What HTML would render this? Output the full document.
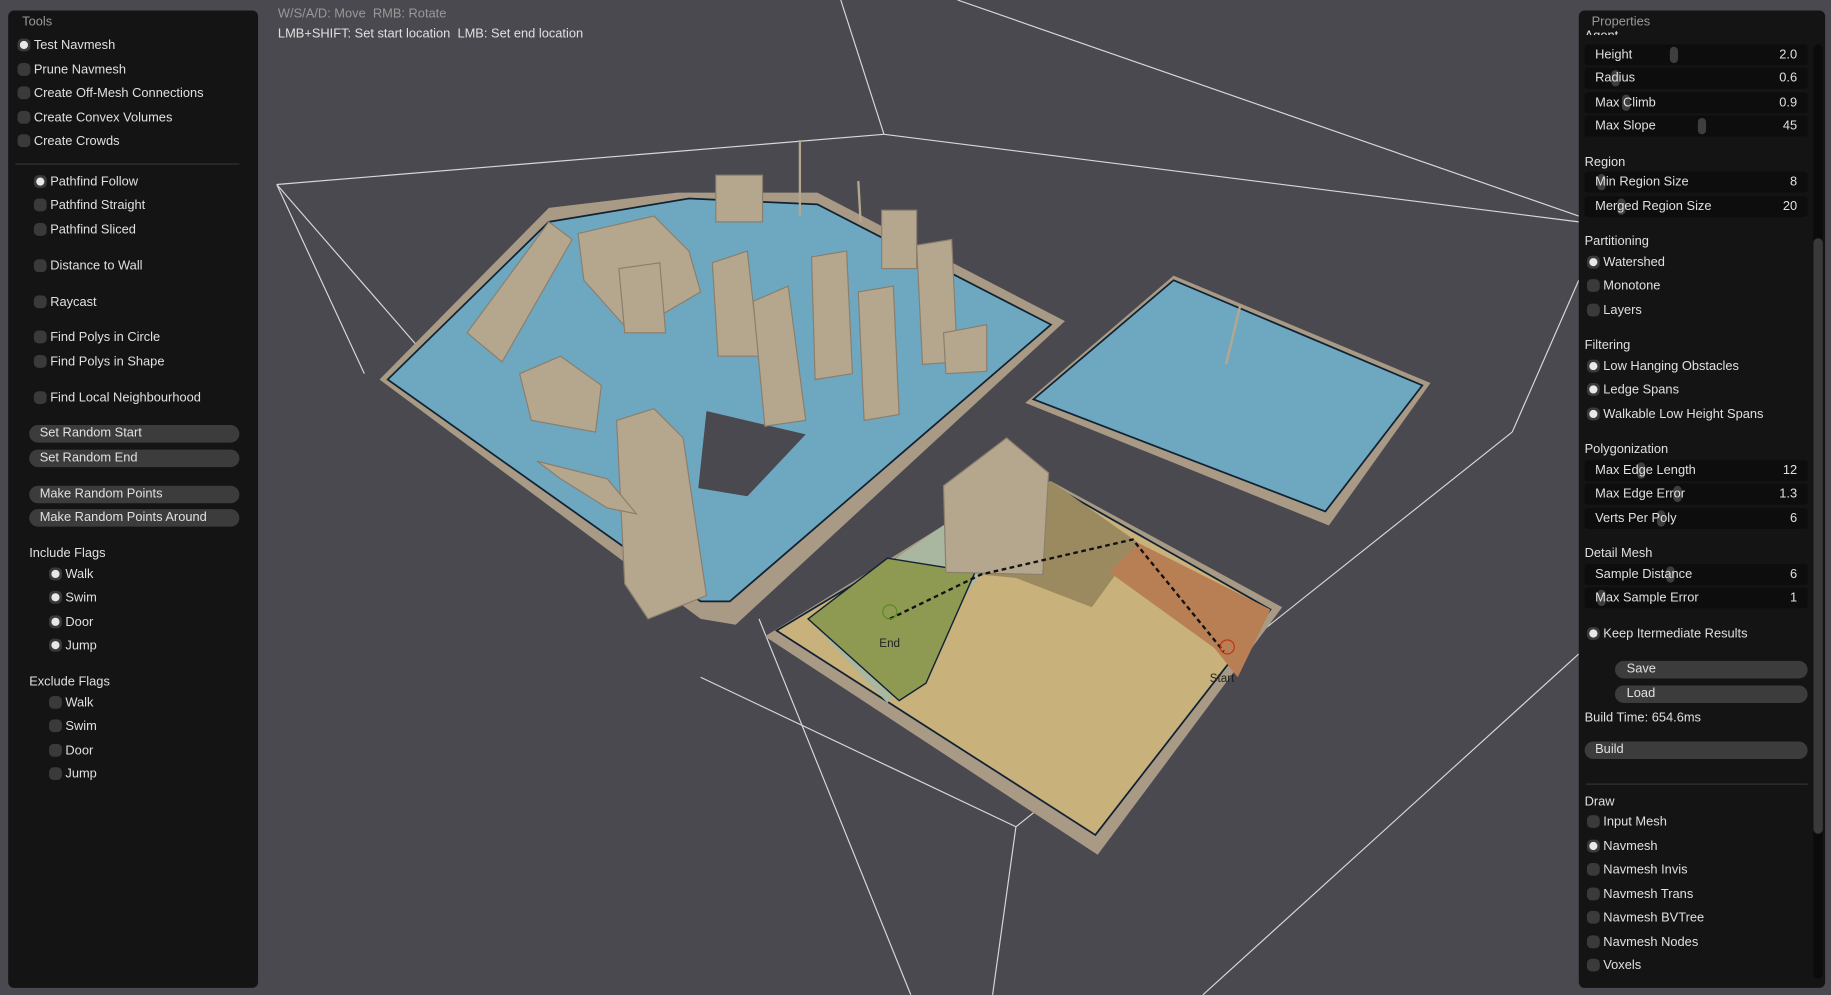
<!DOCTYPE html>
<html><head><meta charset="utf-8"><style>
html,body{margin:0;padding:0;width:1831px;height:995px;overflow:hidden;background:#4a4950;}
#s{position:absolute;left:0;top:0;width:1568px;height:852px;transform:scale(1.16773);transform-origin:0 0;font-family:"Liberation Sans",sans-serif;font-size:11px;color:#e0e0e0;}
.p{position:absolute;background:#141414;border-radius:5px;}
.t{position:absolute;white-space:nowrap;line-height:14px;}
.cb{position:absolute;width:11px;height:11px;border-radius:4px;background:#3a3a3a;margin-top:-1px;}
.cb.on::after{content:"";position:absolute;left:2px;top:2px;width:7px;height:7px;border-radius:4px;background:#e8e8e8;}
.btn{position:absolute;height:15px;border-radius:8px;background:#3c3c3c;line-height:15px;padding-left:9px;box-sizing:border-box;}
.sl{position:absolute;height:18px;background:#0d0d0d;border-radius:3px;line-height:18px;}
.sl .k{position:absolute;top:2px;width:7px;height:14px;border-radius:4px;background:#3e3e3e;}
.sl .l{position:absolute;left:9px;}
.sl .v{position:absolute;right:9px;}
.h{color:#999;}
</style></head><body><div id="s">
<svg width="1568" height="852" style="position:absolute;left:0;top:0">
<g stroke="#d8d8d8" stroke-width="1" fill="none">
<line x1="237" y1="158" x2="757" y2="115"/><line x1="757" y1="115" x2="720" y2="0"/>
<line x1="757" y1="115" x2="1352" y2="190"/><line x1="820" y1="0" x2="1352" y2="185"/>
<line x1="237" y1="158" x2="312" y2="320"/><line x1="237" y1="158" x2="465" y2="420"/>
<line x1="600" y1="580" x2="870" y2="708"/><line x1="870" y1="708" x2="1295" y2="370"/>
<line x1="1295" y1="370" x2="1352" y2="240"/><line x1="870" y1="708" x2="850" y2="852"/>
<line x1="1030" y1="852" x2="1352" y2="560"/><line x1="650" y1="530" x2="780" y2="852"/>
</g>
<!-- left slab -->
<polygon points="325,325 470,178 580,165 700,165 912,275 630,535 600,530" fill="#a89a85"/>
<polygon points="332,325 470,190 590,170 700,175 900,278 625,515 600,515" fill="#6ea8c0" stroke="#123" stroke-width="1.5"/>
<polygon points="605,352 690,372 640,425 598,418" fill="#4a4950"/>
<g fill="#b5a68e" stroke="#8a7e6c" stroke-width="1">
<polygon points="400,285 470,190 490,205 430,310"/>
<polygon points="495,200 560,185 590,215 600,250 540,285 500,240"/>
<rect x="613" y="150" width="40" height="40"/><rect x="755" y="180" width="30" height="50"/>
<polygon points="530,230 565,225 570,285 535,285"/><polygon points="610,225 640,215 650,305 615,305"/>
<polygon points="645,258 675,245 690,360 655,365"/><polygon points="695,220 725,215 730,320 698,325"/>
<polygon points="735,250 765,245 770,355 740,360"/><polygon points="785,210 815,205 820,310 790,312"/>
<polygon points="808,285 845,278 845,318 810,320"/>
<polygon points="445,320 480,305 515,330 510,370 455,360"/>
<polygon points="528,360 560,350 585,375 605,510 555,530 535,500"/>
<polygon points="460,395 520,410 545,440 520,435 480,410"/>
</g>
<line x1="685" y1="185" x2="685" y2="120" stroke="#b5a68e" stroke-width="2"/>
<line x1="737" y1="190" x2="735" y2="155" stroke="#b5a68e" stroke-width="2"/>
<!-- right slab -->
<polygon points="878,345 1005,236 1225,328 1138,450" fill="#a89a85"/>
<polygon points="885,342 1005,240 1218,330 1135,438" fill="#6ea8c0" stroke="#123" stroke-width="1.5"/>
<line x1="1050" y1="312" x2="1062" y2="262" stroke="#b5a68e" stroke-width="2"/>
<!-- bottom slab -->
<polygon points="655,545 840,430 900,412 1098,520 940,732" fill="#a89a85"/>
<polygon points="665,540 840,435 900,415 1088,522 938,715" fill="#c9b17c" stroke="#123" stroke-width="1.5"/>
<polygon points="692,530 815,445 850,478 760,602" fill="#aab7a0"/>
<polygon points="692,530 760,478 835,490 793,585 770,600" fill="#8e9a52" stroke="#123" stroke-width="1.2"/>
<polygon points="840,492 900,412 975,465 935,520 870,495" fill="#9b8a60"/>
<polygon points="950,490 975,465 1088,522 1060,580 1040,555" fill="#b87f55"/>
<polygon points="808,416 862,375 898,405 893,492 810,490" fill="#b5a68e" stroke="#8a7e6c"/>
<polyline points="762,530 840,492 970,462 1048,558" fill="none" stroke="#111" stroke-width="2" stroke-dasharray="4,3"/>
<circle cx="762" cy="524" r="6" fill="none" stroke="#5a8a20"/><circle cx="1051" cy="554" r="6" fill="none" stroke="#c03010"/>
<text x="753" y="554" font-size="10" fill="#222" font-family="Liberation Sans">End</text>
<text x="1036" y="584" font-size="10" fill="#222" font-family="Liberation Sans">Start</text>
</svg>

<div class="t h" style="left:238px;top:5px">W/S/A/D: Move&nbsp; RMB: Rotate</div>
<div class="t" style="left:238px;top:22px">LMB+SHIFT: Set start location&nbsp; LMB: Set end location</div>

<div class="p" style="left:7px;top:9px;width:214px;height:837px">
<div class="t h" style="left:12px;top:3px">Tools</div>
<div class="cb on" style="left:8px;top:25px"></div><div class="t" style="left:22px;top:23px">Test Navmesh</div>
<div class="cb" style="left:8px;top:46px"></div><div class="t" style="left:22px;top:44px">Prune Navmesh</div>
<div class="cb" style="left:8px;top:66px"></div><div class="t" style="left:22px;top:64px">Create Off-Mesh Connections</div>
<div class="cb" style="left:8px;top:87px"></div><div class="t" style="left:22px;top:85px">Create Convex Volumes</div>
<div class="cb" style="left:8px;top:107px"></div><div class="t" style="left:22px;top:105px">Create Crowds</div>
<div style="position:absolute;left:6px;top:131px;width:192px;height:1px;background:#333"></div>
<div class="cb on" style="left:22px;top:142px"></div><div class="t" style="left:36px;top:140px">Pathfind Follow</div>
<div class="cb" style="left:22px;top:162px"></div><div class="t" style="left:36px;top:160px">Pathfind Straight</div>
<div class="cb" style="left:22px;top:183px"></div><div class="t" style="left:36px;top:181px">Pathfind Sliced</div>
<div class="cb" style="left:22px;top:214px"></div><div class="t" style="left:36px;top:212px">Distance to Wall</div>
<div class="cb" style="left:22px;top:245px"></div><div class="t" style="left:36px;top:243px">Raycast</div>
<div class="cb" style="left:22px;top:275px"></div><div class="t" style="left:36px;top:273px">Find Polys in Circle</div>
<div class="cb" style="left:22px;top:296px"></div><div class="t" style="left:36px;top:294px">Find Polys in Shape</div>
<div class="cb" style="left:22px;top:327px"></div><div class="t" style="left:36px;top:325px">Find Local Neighbourhood</div>
<div class="btn" style="left:18px;top:355px;width:180px">Set Random Start</div>
<div class="btn" style="left:18px;top:376px;width:180px">Set Random End</div>
<div class="btn" style="left:18px;top:407px;width:180px">Make Random Points</div>
<div class="btn" style="left:18px;top:427px;width:180px">Make Random Points Around</div>
<div class="t" style="left:18px;top:458px">Include Flags</div>
<div class="cb on" style="left:35px;top:478px"></div><div class="t" style="left:49px;top:476px">Walk</div>
<div class="cb on" style="left:35px;top:498px"></div><div class="t" style="left:49px;top:496px">Swim</div>
<div class="cb on" style="left:35px;top:519px"></div><div class="t" style="left:49px;top:517px">Door</div>
<div class="cb on" style="left:35px;top:539px"></div><div class="t" style="left:49px;top:537px">Jump</div>
<div class="t" style="left:18px;top:568px">Exclude Flags</div>
<div class="cb" style="left:35px;top:588px"></div><div class="t" style="left:49px;top:586px">Walk</div>
<div class="cb" style="left:35px;top:608px"></div><div class="t" style="left:49px;top:606px">Swim</div>
<div class="cb" style="left:35px;top:629px"></div><div class="t" style="left:49px;top:627px">Door</div>
<div class="cb" style="left:35px;top:649px"></div><div class="t" style="left:49px;top:647px">Jump</div>
</div>

<div class="p" style="left:1352px;top:9px;width:211px;height:837px;overflow:hidden">
<div class="t h" style="left:11px;top:3px">Properties</div>
<div style="position:absolute;left:201px;top:29px;width:8px;height:800px;background:#0b0b0b;border-radius:4px"></div>
<div style="position:absolute;left:201px;top:195px;width:8px;height:510px;background:#3a3a3a;border-radius:4px"></div>
<div class="t" style="left:5px;top:15px;height:6px;overflow:hidden">Agent</div>
<div class="sl" style="left:5px;top:29px;width:191px"><div class="k" style="left:73px"></div><span class="l">Height</span><span class="v">2.0</span></div>
<div class="sl" style="left:5px;top:49px;width:191px"><div class="k" style="left:23px"></div><span class="l">Radius</span><span class="v">0.6</span></div>
<div class="sl" style="left:5px;top:70px;width:191px"><div class="k" style="left:32px"></div><span class="l">Max Climb</span><span class="v">0.9</span></div>
<div class="sl" style="left:5px;top:90px;width:191px"><div class="k" style="left:97px"></div><span class="l">Max Slope</span><span class="v">45</span></div>
<div class="t" style="left:5px;top:123px">Region</div>
<div class="sl" style="left:5px;top:138px;width:191px"><div class="k" style="left:11px"></div><span class="l">Min Region Size</span><span class="v">8</span></div>
<div class="sl" style="left:5px;top:159px;width:191px"><div class="k" style="left:28px"></div><span class="l">Merged Region Size</span><span class="v">20</span></div>
<div class="t" style="left:5px;top:191px">Partitioning</div>
<div class="cb on" style="left:7px;top:211px"></div><div class="t" style="left:21px;top:209px">Watershed</div>
<div class="cb" style="left:7px;top:231px"></div><div class="t" style="left:21px;top:229px">Monotone</div>
<div class="cb" style="left:7px;top:252px"></div><div class="t" style="left:21px;top:250px">Layers</div>
<div class="t" style="left:5px;top:280px">Filtering</div>
<div class="cb on" style="left:7px;top:300px"></div><div class="t" style="left:21px;top:298px">Low Hanging Obstacles</div>
<div class="cb on" style="left:7px;top:320px"></div><div class="t" style="left:21px;top:318px">Ledge Spans</div>
<div class="cb on" style="left:7px;top:341px"></div><div class="t" style="left:21px;top:339px">Walkable Low Height Spans</div>
<div class="t" style="left:5px;top:369px">Polygonization</div>
<div class="sl" style="left:5px;top:385px;width:191px"><div class="k" style="left:45px"></div><span class="l">Max Edge Length</span><span class="v">12</span></div>
<div class="sl" style="left:5px;top:405px;width:191px"><div class="k" style="left:76px"></div><span class="l">Max Edge Error</span><span class="v">1.3</span></div>
<div class="sl" style="left:5px;top:426px;width:191px"><div class="k" style="left:62px"></div><span class="l">Verts Per Poly</span><span class="v">6</span></div>
<div class="t" style="left:5px;top:458px">Detail Mesh</div>
<div class="sl" style="left:5px;top:474px;width:191px"><div class="k" style="left:70px"></div><span class="l">Sample Distance</span><span class="v">6</span></div>
<div class="sl" style="left:5px;top:494px;width:191px"><div class="k" style="left:11px"></div><span class="l">Max Sample Error</span><span class="v">1</span></div>
<div class="cb on" style="left:7px;top:529px"></div><div class="t" style="left:21px;top:527px">Keep Itermediate Results</div>
<div class="btn" style="left:31px;top:557px;width:165px;padding-left:10px">Save</div>
<div class="btn" style="left:31px;top:578px;width:165px;padding-left:10px">Load</div>
<div class="t" style="left:5px;top:599px">Build Time: 654.6ms</div>
<div class="btn" style="left:5px;top:626px;width:191px">Build</div>
<div style="position:absolute;left:6px;top:662px;width:190px;height:1px;background:#333"></div>
<div class="t" style="left:5px;top:671px">Draw</div>
<div class="cb" style="left:7px;top:690px"></div><div class="t" style="left:21px;top:688px">Input Mesh</div>
<div class="cb on" style="left:7px;top:711px"></div><div class="t" style="left:21px;top:709px">Navmesh</div>
<div class="cb" style="left:7px;top:731px"></div><div class="t" style="left:21px;top:729px">Navmesh Invis</div>
<div class="cb" style="left:7px;top:752px"></div><div class="t" style="left:21px;top:750px">Navmesh Trans</div>
<div class="cb" style="left:7px;top:772px"></div><div class="t" style="left:21px;top:770px">Navmesh BVTree</div>
<div class="cb" style="left:7px;top:793px"></div><div class="t" style="left:21px;top:791px">Navmesh Nodes</div>
<div class="cb" style="left:7px;top:813px"></div><div class="t" style="left:21px;top:811px">Voxels</div>
</div>
</div></body></html>
